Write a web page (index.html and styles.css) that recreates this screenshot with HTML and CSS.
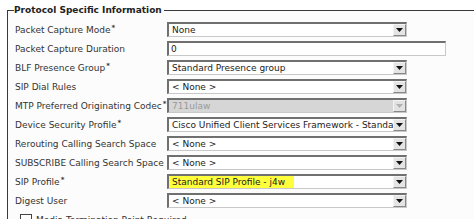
FILE: index.html
```html
<!DOCTYPE html>
<html lang="en">
<head>
  <meta charset="UTF-8">
  <title>Protocol Specific Information</title>
  <link rel="stylesheet" href="styles.css">
</head>
<body>
  <fieldset class="section">
    <legend>Protocol Specific Information</legend>

    <div class="row">
      <label>Packet Capture Mode<sup>*</sup></label>
      <div class="select"><span class="value">None</span><span class="arrow"><svg width="7" height="4" viewBox="0 0 7 4"><path d="M0 0h7L3.5 4z"/></svg></span></div>
    </div>

    <div class="row">
      <label>Packet Capture Duration</label>
      <div class="textbox">0</div>
    </div>

    <div class="row">
      <label>BLF Presence Group<sup>*</sup></label>
      <div class="select"><span class="value">Standard Presence group</span><span class="arrow"><svg width="7" height="4" viewBox="0 0 7 4"><path d="M0 0h7L3.5 4z"/></svg></span></div>
    </div>

    <div class="row">
      <label>SIP Dial Rules</label>
      <div class="select"><span class="value">&lt; None &gt;</span><span class="arrow"><svg width="7" height="4" viewBox="0 0 7 4"><path d="M0 0h7L3.5 4z"/></svg></span></div>
    </div>

    <div class="row">
      <label>MTP Preferred Originating Codec<sup>*</sup></label>
      <div class="select disabled"><span class="value">711ulaw</span><span class="arrow"><svg width="7" height="4" viewBox="0 0 7 4"><path d="M0 0h7L3.5 4z"/></svg></span></div>
    </div>

    <div class="row">
      <label>Device Security Profile<sup>*</sup></label>
      <div class="select"><span class="value">Cisco Unified Client Services Framework - Standard SIP Non-Secure Profile</span><span class="arrow"><svg width="7" height="4" viewBox="0 0 7 4"><path d="M0 0h7L3.5 4z"/></svg></span></div>
    </div>

    <div class="row">
      <label>Rerouting Calling Search Space</label>
      <div class="select"><span class="value">&lt; None &gt;</span><span class="arrow"><svg width="7" height="4" viewBox="0 0 7 4"><path d="M0 0h7L3.5 4z"/></svg></span></div>
    </div>

    <div class="row">
      <label>SUBSCRIBE Calling Search Space</label>
      <div class="select"><span class="value">&lt; None &gt;</span><span class="arrow"><svg width="7" height="4" viewBox="0 0 7 4"><path d="M0 0h7L3.5 4z"/></svg></span></div>
    </div>

    <div class="row">
      <label>SIP Profile<sup>*</sup></label>
      <div class="select"><span class="value"><mark>Standard SIP Profile - j4w</mark></span><span class="arrow"><svg width="7" height="4" viewBox="0 0 7 4"><path d="M0 0h7L3.5 4z"/></svg></span></div>
    </div>

    <div class="row">
      <label>Digest User</label>
      <div class="select"><span class="value">&lt; None &gt;</span><span class="arrow"><svg width="7" height="4" viewBox="0 0 7 4"><path d="M0 0h7L3.5 4z"/></svg></span></div>
    </div>

    <div class="check-row">
      <span class="checkbox"></span>
      <span>Media Termination Point Required</span>
    </div>
  </fieldset>
</body>
</html>
```

FILE: styles.css
```css
html, body {
  margin: 0;
  height: 219px;
  overflow: hidden;
  background: #fff;
}
body {
  font-family: "DejaVu Sans", Verdana, sans-serif;
  font-size: 9px;
  color: #333;
}
.section {
  margin: 5px 0 0 7px;
  width: 600px;
  padding: 5px 0 0 7px;
  border: none;
  border-top: 1px solid #3a3a3a;
  border-left: 1px solid #3a3a3a;
  background: #fcfcfc;
}
.section legend {
  font-weight: bold;
  color: #222;
  padding: 0 2px 0 0;
  margin-left: -1px;
}
.row {
  display: flex;
  align-items: center;
  height: 19px;
}
.row label {
  width: 152px;
  flex: none;
  color: #333;
}
.row sup {
  font-size: 7px;
  font-weight: bold;
  vertical-align: 3px;
  line-height: 0;
  margin-left: 1px;
}
.select, .textbox {
  box-sizing: border-box;
  height: 15px;
  background: #fff;
  border-top: 2px solid #707070;
  border-left: 2px solid #707070;
  border-right: 1px solid #c8c8c8;
  border-bottom: 1px solid #c8c8c8;
  color: #222;
}
.select {
  width: 240px;
  display: flex;
  align-items: stretch;
}
.select .value {
  flex: 1;
  overflow: hidden;
  white-space: nowrap;
  padding-left: 3px;
  line-height: 12px;
}
.select mark {
  background: #ffff3c;
  color: #222;
  padding: 1px 9px 1px 3px;
  margin-left: -3px;
}
.select .arrow {
  width: 13px;
  flex: none;
  display: flex;
  align-items: center;
  justify-content: center;
  background: #e4e4e4;
  border-left: 1px solid #f4f4f4;
  border-top: 1px solid #f4f4f4;
  border-right: 1px solid #888;
  border-bottom: 1px solid #888;
  box-sizing: border-box;
}
.select .arrow svg {
  fill: #111;
}
.select.disabled {
  background: #d6d6d6;
  color: #9a9a9a;
}
.select.disabled .arrow {
  background: #e2e2e2;
}
.select.disabled .arrow svg {
  fill: #b0b0b0;
}
.textbox {
  width: 279px;
  padding-left: 2px;
  line-height: 12px;
}
.check-row {
  display: flex;
  align-items: center;
  gap: 4px;
  height: 19px;
  padding-left: 5px;
}
.checkbox {
  width: 10px;
  height: 10px;
  border: 1px solid #444;
  background: #fff;
}
```
